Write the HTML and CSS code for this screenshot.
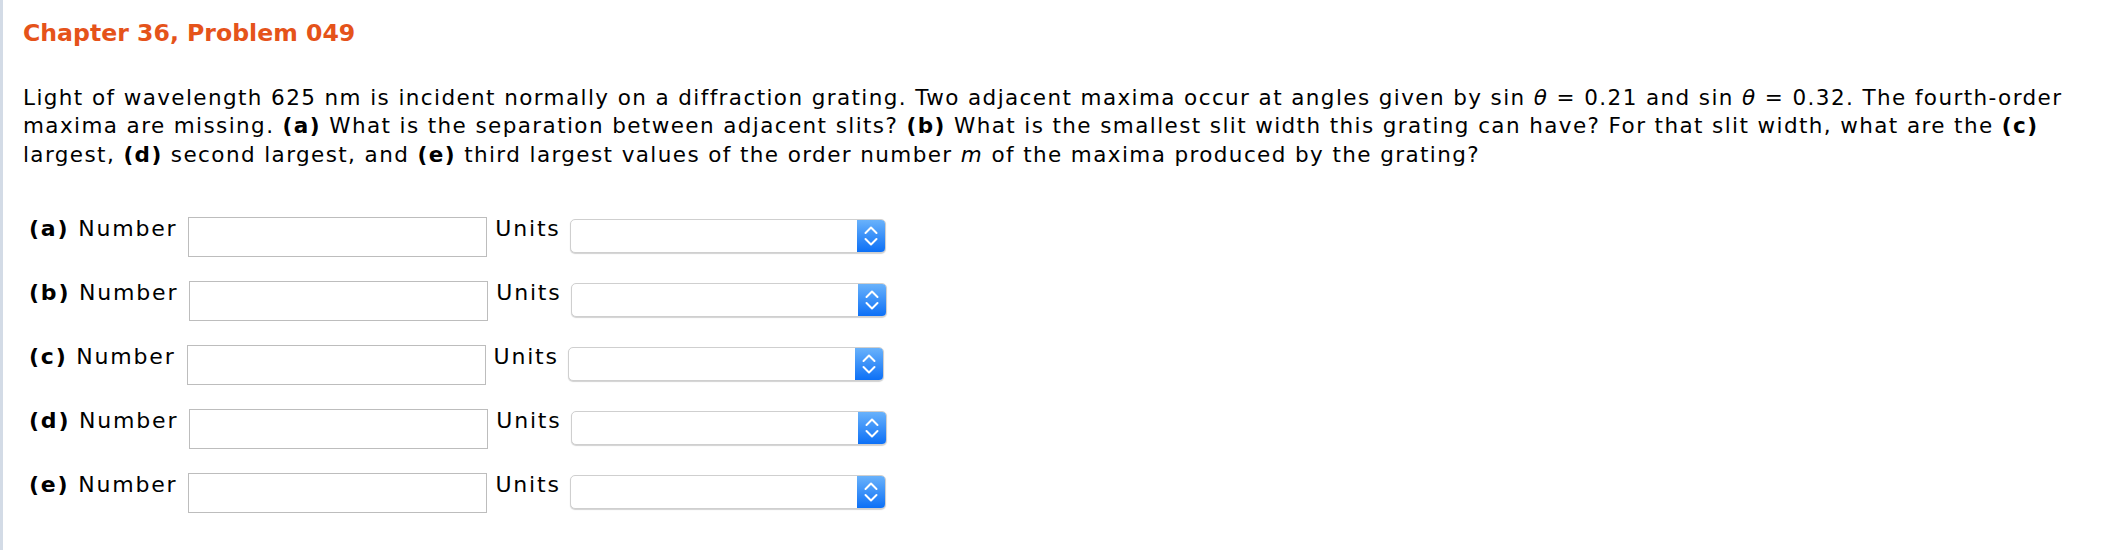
FILE: index.html
```html
<!DOCTYPE html>
<html>
<head>
<meta charset="utf-8">
<link rel="stylesheet" href="styles.css">
</head>
<body>
<div class="page">
  <h1 class="title">Chapter 36, Problem 049</h1>
  <p class="question">Light of wavelength 625 nm is incident normally on a diffraction grating. Two adjacent maxima occur at angles given by sin <i>θ</i> = 0.21 and sin <i>θ</i> = 0.32. The fourth-order<br>maxima are missing. <b>(a)</b> What is the separation between adjacent slits? <b>(b)</b> What is the smallest slit width this grating can have? For that slit width, what are the <b>(c)</b><br>largest, <b>(d)</b> second largest, and <b>(e)</b> third largest values of the order number <i>m</i> of the maxima produced by the grating?</p>
  <div class="answers">
    <div class="row"><span class="label"><b>(a)</b> Number</span><input class="num" type="text"><span class="label units">Units</span><div class="select"><span class="select-btn"><svg width="14" height="20" viewBox="0 0 14 20"><path d="M1.5 7 L7 1.5 L12.5 7 M1.5 13 L7 18.5 L12.5 13" fill="none" stroke="#fff" stroke-width="2" stroke-linecap="round" stroke-linejoin="round"/></svg></span></div></div>
    <div class="row"><span class="label"><b>(b)</b> Number</span><input class="num" type="text"><span class="label units">Units</span><div class="select"><span class="select-btn"><svg width="14" height="20" viewBox="0 0 14 20"><path d="M1.5 7 L7 1.5 L12.5 7 M1.5 13 L7 18.5 L12.5 13" fill="none" stroke="#fff" stroke-width="2" stroke-linecap="round" stroke-linejoin="round"/></svg></span></div></div>
    <div class="row"><span class="label"><b>(c)</b> Number</span><input class="num" type="text"><span class="label units">Units</span><div class="select"><span class="select-btn"><svg width="14" height="20" viewBox="0 0 14 20"><path d="M1.5 7 L7 1.5 L12.5 7 M1.5 13 L7 18.5 L12.5 13" fill="none" stroke="#fff" stroke-width="2" stroke-linecap="round" stroke-linejoin="round"/></svg></span></div></div>
    <div class="row"><span class="label"><b>(d)</b> Number</span><input class="num" type="text"><span class="label units">Units</span><div class="select"><span class="select-btn"><svg width="14" height="20" viewBox="0 0 14 20"><path d="M1.5 7 L7 1.5 L12.5 7 M1.5 13 L7 18.5 L12.5 13" fill="none" stroke="#fff" stroke-width="2" stroke-linecap="round" stroke-linejoin="round"/></svg></span></div></div>
    <div class="row"><span class="label"><b>(e)</b> Number</span><input class="num" type="text"><span class="label units">Units</span><div class="select"><span class="select-btn"><svg width="14" height="20" viewBox="0 0 14 20"><path d="M1.5 7 L7 1.5 L12.5 7 M1.5 13 L7 18.5 L12.5 13" fill="none" stroke="#fff" stroke-width="2" stroke-linecap="round" stroke-linejoin="round"/></svg></span></div></div>
  </div>
</div>
</body>
</html>
```
FILE: styles.css
```css
html, body {
  margin: 0;
  padding: 0;
  background: #fff;
}
body {
  font-family: "DejaVu Sans", Verdana, sans-serif;
  color: #000;
}
.page {
  border-left: 3px solid #d3dbe6;
  min-height: 550px;
  box-sizing: border-box;
  padding: 19px 0 0 20px;
}
.title {
  margin: 0;
  font-size: 23.6px;
  line-height: 28px;
  font-weight: bold;
  color: #e5531a;
}
.question {
  margin: 37px 0 0 0;
  font-size: 21.5px;
  line-height: 28.4px;
  letter-spacing: 1.4px;
  white-space: nowrap;
}
.answers {
  margin-top: 48px;
  padding-left: 6px;
  display: flex;
  flex-direction: column;
  gap: 24px;
}
.row {
  display: flex;
  align-items: flex-start;
  height: 40px;
}
.label {
  font-size: 22px;
  line-height: 24px;
  letter-spacing: 1.8px;
  white-space: nowrap;
}
.num {
  box-sizing: border-box;
  width: 299px;
  height: 40px;
  margin: 0 0 0 11px;
  border: 1px solid #bdbdbd;
  padding: 0;
  background: #fff;
  outline: none;
}
.units {
  margin-left: 8px;
}
.select {
  box-sizing: border-box;
  width: 316px;
  height: 34px;
  margin: 2px 0 0 9px;
  border: 1px solid #cfcfcf;
  border-radius: 5px;
  background: #fff;
  box-shadow: 0 1px 1px rgba(0,0,0,0.18);
  display: flex;
  justify-content: flex-end;
  overflow: hidden;
}
.select-btn {
  width: 29px;
  margin: -1px -1px -1px 0;
  background: linear-gradient(#6cb4fb, #0a6ef6);
  border-radius: 0 5px 5px 0;
  display: flex;
  align-items: center;
  justify-content: center;
}
```
